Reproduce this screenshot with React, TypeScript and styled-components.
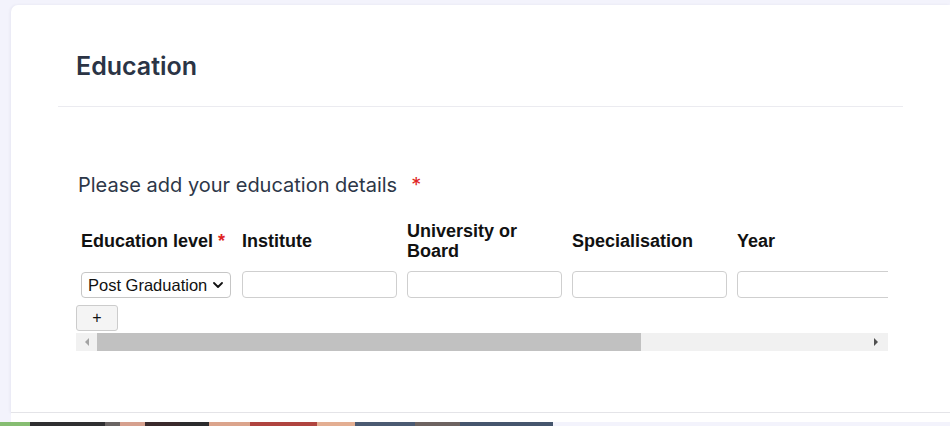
import React from "react";
import styled, { createGlobalStyle } from "styled-components";

const GlobalStyle = createGlobalStyle`
  html, body {
    margin: 0;
    padding: 0;
    background: #f3f3fc;
    font-family: Inter, "Noto Sans", sans-serif;
  }
  * {
    box-sizing: border-box;
  }
`;

const columns = [
  { key: "institute", label: "Institute" },
  { key: "board", label: "University or Board" },
  { key: "spec", label: "Specialisation" },
  { key: "year", label: "Year" },
];

const photos = [
  { w: 30, c: "#86bd72" },
  { w: 75, c: "#2f2f31" },
  { w: 15, c: "#6a6463" },
  { w: 25, c: "#d6a08e" },
  { w: 35, c: "#3a2a2c" },
  { w: 29, c: "#2b2b2d" },
  { w: 41, c: "#dba48c" },
  { w: 67, c: "#b0443f" },
  { w: 38, c: "#e3ae92" },
  { w: 60, c: "#4b5a72" },
  { w: 45, c: "#6d6360" },
  { w: 93, c: "#45556d" },
];

const App = () => {
  return (
    <>
      <GlobalStyle />
      <Page>
        <Card>
          <Inner>
            <CardHeader>
              <Title>Education</Title>
            </CardHeader>
            <CardBody>
              <Prompt>
                Please add your education details
                <PromptStar>*</PromptStar>
              </Prompt>
              <ScrollArea>
                <Table>
                  <thead>
                    <tr>
                      <Th $w={151}>
                        Education level <Req>*</Req>
                      </Th>
                      {columns.map((c) => (
                        <Th key={c.key} $w={155}>
                          {c.label}
                        </Th>
                      ))}
                    </tr>
                  </thead>
                  <tbody>
                    <tr>
                      <Td>
                        <SelectWrap>
                          <Select defaultValue="pg">
                            <option value="ug">Graduation</option>
                            <option value="pg">Post Graduation</option>
                            <option value="phd">Doctorate</option>
                          </Select>
                          <Chevron viewBox="0 0 10 6" aria-hidden="true">
                            <path d="M1 1 L5 5 L9 1" />
                          </Chevron>
                        </SelectWrap>
                      </Td>
                      {columns.map((c) => (
                        <Td key={c.key}>
                          <Input type="text" />
                        </Td>
                      ))}
                    </tr>
                  </tbody>
                </Table>
                <AddButton type="button">+</AddButton>
              </ScrollArea>
              <ScrollBar>
                <ScrollButton>
                  <Arrow $dir="left" />
                </ScrollButton>
                <Track>
                  <Thumb />
                </Track>
                <ScrollButton>
                  <Arrow $dir="right" />
                </ScrollButton>
              </ScrollBar>
            </CardBody>
          </Inner>
        </Card>
        <NextCard />
        <PhotoStrip>
          {photos.map((p, i) => (
            <Photo key={i} $w={p.w} $c={p.c} />
          ))}
        </PhotoStrip>
      </Page>
    </>
  );
};

export default App;

const Page = styled.div`
  padding-top: 5px;
  width: 950px;
  height: 426px;
  overflow: hidden;
`;

const Card = styled.div`
  margin-left: 11px;
  height: 408px;
  background: #ffffff;
  border-radius: 7px 0 0 0;
  border-bottom: 1px solid #e4e4e8;
  box-shadow: -1px 0 3px rgba(40, 40, 90, 0.06);
`;

const Inner = styled.div`
  margin-left: 47px;
  width: 845px;
`;

const CardHeader = styled.div`
  padding: 45px 18px 24px;
  border-bottom: 1px solid #ebebf0;
`;

const Title = styled.h2`
  margin: 0;
  font-family: Inter, sans-serif;
  font-size: 25px;
  line-height: 32px;
  font-weight: 600;
  color: #2b3445;
`;

const CardBody = styled.div`
  padding: 66px 0 0 18px;
`;

const Prompt = styled.p`
  margin: 0 0 19px 2px;
  font-family: Inter, sans-serif;
  font-size: 20px;
  line-height: 24px;
  color: #2d3748;
`;

const PromptStar = styled.span`
  margin-left: 14px;
  color: #e02424;
`;

const ScrollArea = styled.div`
  width: 812px;
  overflow: hidden;
`;

const Table = styled.table`
  border-collapse: separate;
  border-spacing: 0;
  font-family: "Liberation Sans", Arial, sans-serif;
`;

const Th = styled.th<{ $w: number }>`
  width: ${(p) => p.$w + 10}px;
  min-width: ${(p) => p.$w + 10}px;
  padding: 5px;
  text-align: left;
  vertical-align: middle;
  font-size: 18px;
  font-weight: 700;
  line-height: 20px;
  color: #111111;
`;

const Req = styled.span`
  color: #e02424;
`;

const Td = styled.td`
  padding: 5px;
  vertical-align: middle;
`;

const SelectWrap = styled.div`
  position: relative;
  width: 150px;
  height: 26px;
`;

const Select = styled.select`
  appearance: none;
  width: 150px;
  height: 26px;
  font-family: "Liberation Sans", Arial, sans-serif;
  font-size: 16.5px;
  color: #111111;
  background: #ffffff;
  border: 1px solid #c6c6c6;
  border-radius: 4px;
  padding: 0 22px 0 6px;
`;

const Chevron = styled.svg`
  position: absolute;
  right: 8px;
  top: 10px;
  width: 10px;
  height: 6px;
  fill: none;
  stroke: #111111;
  stroke-width: 1.8;
  stroke-linecap: round;
  stroke-linejoin: round;
  pointer-events: none;
`;

const Input = styled.input`
  display: block;
  width: 155px;
  height: 27px;
  border: 1px solid #cfcfcf;
  border-radius: 4px;
  background: #ffffff;
  font-family: "Liberation Sans", Arial, sans-serif;
  font-size: 14px;
  padding: 0 6px;
`;

const AddButton = styled.button`
  display: block;
  margin: 2px 0 2px;
  width: 42px;
  height: 26px;
  padding: 0;
  font-family: "Liberation Sans", Arial, sans-serif;
  font-size: 16px;
  color: #111111;
  background: #f4f4f4;
  border: 1px solid #cccccc;
  border-radius: 3px;
`;

const ScrollBar = styled.div`
  display: flex;
  width: 812px;
  height: 18px;
  background: #f1f1f1;
`;

const ScrollButton = styled.div`
  display: flex;
  align-items: center;
  justify-content: center;
  width: 21px;
  flex: none;
`;

const Track = styled.div`
  flex: 1;
  display: flex;
`;

const Thumb = styled.div`
  width: 544px;
  background: #c1c1c1;
`;

const Arrow = styled.div<{ $dir: "left" | "right" }>`
  width: 0;
  height: 0;
  border-top: 4px solid transparent;
  border-bottom: 4px solid transparent;
  ${(p) =>
    p.$dir === "left"
      ? "border-right: 4px solid #a3a3a3;"
      : "border-left: 4px solid #505050; margin-left: -4px;"}
`;

const NextCard = styled.div`
  margin-left: 11px;
  height: 9px;
  background: #ffffff;
`;

const PhotoStrip = styled.div`
  display: flex;
  height: 5px;
`;

const Photo = styled.div<{ $w: number; $c: string }>`
  width: ${(p) => p.$w}px;
  background: ${(p) => p.$c};
`;
